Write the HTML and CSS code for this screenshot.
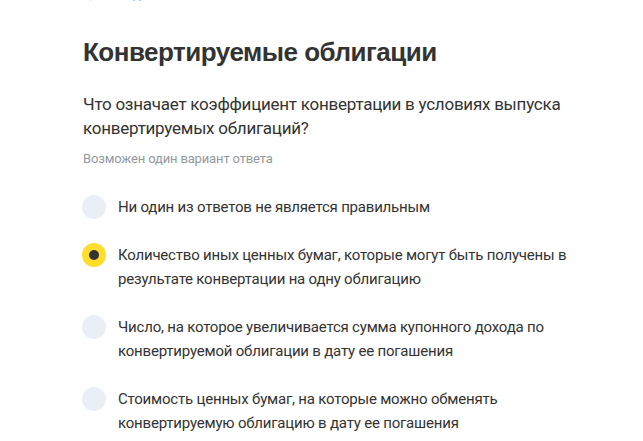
FILE: index.html
```html
<!DOCTYPE html>
<html lang="ru">
<head>
<meta charset="utf-8">
<link rel="stylesheet" href="styles.css">
</head>
<body>
<main class="page">
  <a class="back"><svg class="back-icon" width="10" height="10" viewBox="0 0 10 10"><path d="M6 1L2 5l4 4" fill="none" stroke="#9299a2" stroke-width="1.6"/></svg><span class="back-text">Назад</span></a>
  <h1 class="title">Конвертируемые облигации</h1>
  <p class="question">Что означает коэффициент конвертации в условиях выпуска конвертируемых облигаций?</p>
  <p class="hint">Возможен один вариант ответа</p>
  <ul class="options">
    <li class="option"><span class="radio"></span><span class="label">Ни один из ответов не является правильным</span></li>
    <li class="option selected"><span class="radio"></span><span class="label">Количество иных ценных бумаг, которые могут быть получены в результате конвертации на одну облигацию</span></li>
    <li class="option"><span class="radio"></span><span class="label">Число, на которое увеличивается сумма купонного дохода по конвертируемой облигации в дату ее погашения</span></li>
    <li class="option"><span class="radio"></span><span class="label">Стоимость ценных бумаг, на которые можно обменять конвертируемую облигацию в дату ее погашения</span></li>
  </ul>
</main>
</body>
</html>
```

FILE: styles.css
```css
html, body {
  margin: 0;
  padding: 0;
  background: #ffffff;
}
body {
  font-family: Roboto, "Noto Sans", sans-serif;
  color: #333333;
  overflow: hidden;
}
.page {
  width: 488px;
  padding-left: 83px;
}
.back {
  display: flex;
  align-items: flex-end;
  gap: 8px;
  margin-top: -12px;
  height: 14px;
  font-size: 13px;
  line-height: 14px;
}
.back-icon {
  flex: none;
  margin-left: 2px;
  margin-bottom: 1px;
}
.back-text {
  color: #7fa8e8;
}
.title {
  margin: 32px 0 0;
  font-family: "Liberation Sans", Arial, sans-serif;
  font-weight: 700;
  font-size: 26px;
  letter-spacing: -0.5px;
  line-height: 36px;
  color: #333333;
}
.question {
  margin: 22px 0 0;
  font-size: 17px;
  letter-spacing: -0.25px;
  line-height: 24px;
  color: #333333;
}
.hint {
  margin: 11px 0 0;
  font-size: 13px;
  letter-spacing: -0.15px;
  line-height: 16px;
  color: #9299a2;
}
.options {
  list-style: none;
  margin: 28px 0 0;
  padding: 0;
  display: flex;
  flex-direction: column;
  gap: 24px;
}
.option {
  display: flex;
  align-items: flex-start;
  gap: 12px;
}
.radio {
  flex: none;
  width: 24px;
  height: 24px;
  border-radius: 50%;
  background: #eaeff6;
  display: flex;
  align-items: center;
  justify-content: center;
  margin-left: -1px;
}
.selected .radio {
  background: #ffdd2d;
}
.selected .radio::after {
  content: "";
  width: 10px;
  height: 10px;
  border-radius: 50%;
  background: #333333;
}
.label {
  font-size: 15px;
  letter-spacing: -0.2px;
  line-height: 24px;
  color: #333333;
}
```
